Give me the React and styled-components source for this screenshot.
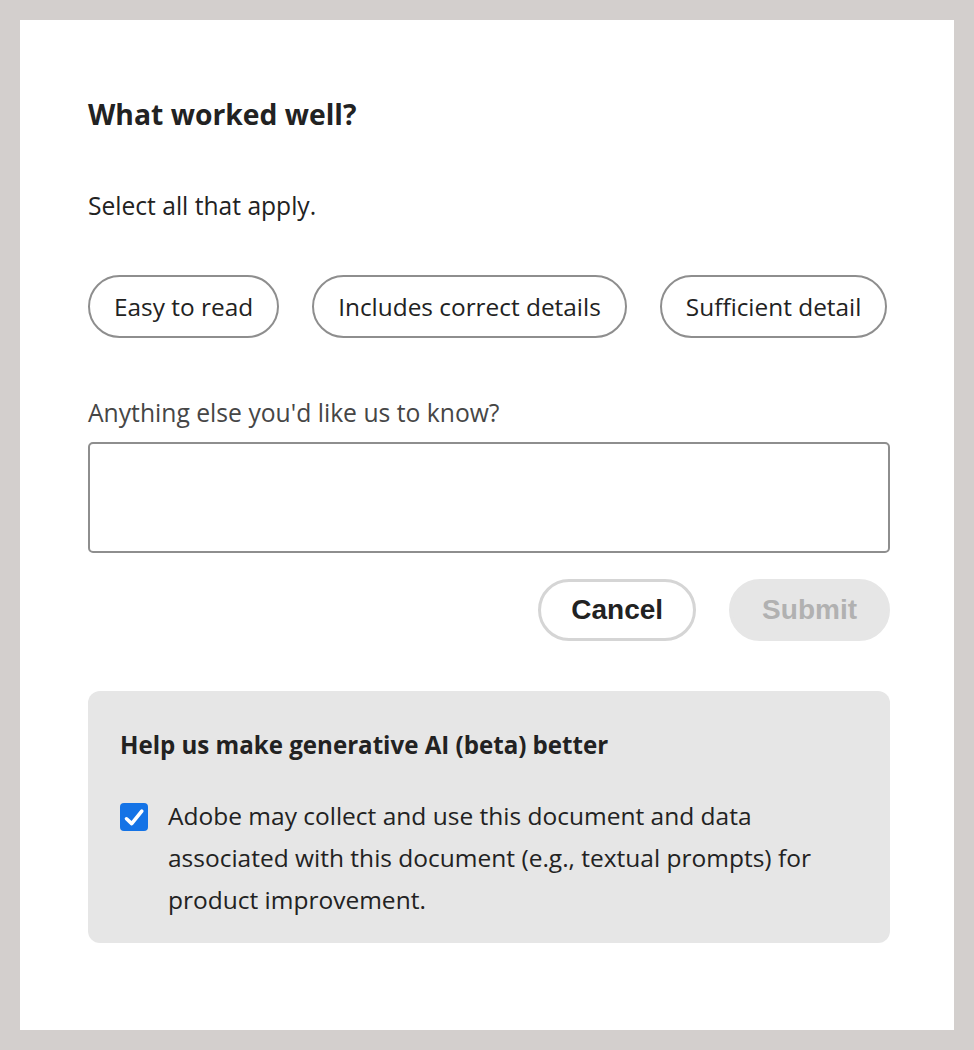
import React, { useState } from "react";
import styled, { createGlobalStyle } from "styled-components";

const GlobalStyle = createGlobalStyle`
  html, body {
    margin: 0;
    padding: 0;
    background: #d3cfcd;
  }
  body {
    font-family: "Open Sans", "Noto Sans", sans-serif;
    color: #222222;
  }
  * { box-sizing: border-box; }
`;

const Page = styled.div`
  padding: 20px;
  min-height: 1050px;
`;

const Card = styled.div`
  background: #ffffff;
  height: 1010px;
  padding: 76px 64px 0 68px;
  display: flex;
  flex-direction: column;
`;

const Title = styled.h2`
  margin: 0;
  font-size: 28.3px;
  line-height: 36px;
  font-weight: 700;
  color: #222222;
`;

const Hint = styled.p`
  margin: 58px 0 0;
  font-size: 24.6px;
  line-height: 32px;
  color: #222222;
`;

const ChipRow = styled.div`
  margin-top: 53px;
  display: flex;
  gap: 33px;
`;

const Chip = styled.button`
  height: 63px;
  padding: 0 24px;
  border: 2px solid ${(p) => (p.$on ? "#222222" : "#8e8e8e")};
  border-radius: 32px;
  background: ${(p) => (p.$on ? "#f0f0f0" : "#ffffff")};
  font-family: "Open Sans", "Noto Sans", sans-serif;
  font-size: 24.4px;
  color: #222222;
  cursor: pointer;
  white-space: nowrap;
`;

const Label = styled.label`
  display: block;
  margin-top: 59px;
  font-size: 24.7px;
  line-height: 32px;
  color: #464646;
`;

const TextArea = styled.textarea`
  display: block;
  margin-top: 13px;
  width: 802px;
  height: 111px;
  border: 2px solid #8e8e8e;
  border-radius: 5px;
  resize: none;
  padding: 10px 14px;
  font-family: "Open Sans", "Noto Sans", sans-serif;
  font-size: 22px;
  outline: none;
`;

const Actions = styled.div`
  margin-top: 26px;
  width: 802px;
  display: flex;
  justify-content: flex-end;
  gap: 33px;
`;

const ActionButton = styled.button`
  height: 62px;
  padding: 0 30px;
  border-radius: 31px;
  border: 3px solid ${(p) => (p.$primary ? "#e6e6e6" : "#d5d5d5")};
  background: ${(p) => (p.$primary ? "#e6e6e6" : "#ffffff")};
  color: ${(p) => (p.$primary ? "#b1b1b1" : "#222222")};
  font-family: "Liberation Sans", Arial, sans-serif;
  font-weight: 700;
  font-size: 28px;
  cursor: ${(p) => (p.disabled ? "default" : "pointer")};
`;

const ConsentBox = styled.div`
  margin-top: 50px;
  width: 802px;
  height: 252px;
  background: #e6e6e6;
  border-radius: 12px;
  padding: 38px 32px 0 32px;
`;

const ConsentTitle = styled.h3`
  margin: 0;
  font-size: 24.1px;
  line-height: 32px;
  font-weight: 700;
  color: #222222;
`;

const ConsentRow = styled.label`
  margin-top: 34px;
  display: flex;
  align-items: flex-start;
  gap: 20px;
  cursor: pointer;
`;

const Box = styled.span`
  flex: none;
  margin-top: 8px;
  width: 28px;
  height: 28px;
  border-radius: 4px;
  background: ${(p) => (p.$checked ? "#1473e6" : "#ffffff")};
  border: ${(p) => (p.$checked ? "none" : "2px solid #6e6e6e")};
  display: flex;
  align-items: center;
  justify-content: center;
`;

const ConsentText = styled.span`
  font-size: 24.5px;
  line-height: 42px;
  color: #222222;
`;

const chips = ["Easy to read", "Includes correct details", "Sufficient detail"];

export default function App() {
  const [selected, setSelected] = useState([]);
  const [checked, setChecked] = useState(true);
  const [text, setText] = useState("");

  const toggle = (c) =>
    setSelected((s) => (s.includes(c) ? s.filter((x) => x !== c) : [...s, c]));

  const canSubmit = selected.length > 0 || text.trim().length > 0;

  return (
    <>
      <GlobalStyle />
      <Page>
        <Card>
          <Title>What worked well?</Title>
          <Hint>Select all that apply.</Hint>
          <ChipRow>
            {chips.map((c) => (
              <Chip key={c} $on={selected.includes(c)} onClick={() => toggle(c)}>
                {c}
              </Chip>
            ))}
          </ChipRow>
          <Label htmlFor="more">Anything else you'd like us to know?</Label>
          <TextArea id="more" value={text} onChange={(e) => setText(e.target.value)} />
          <Actions>
            <ActionButton>Cancel</ActionButton>
            <ActionButton $primary disabled={!canSubmit}>
              Submit
            </ActionButton>
          </Actions>
          <ConsentBox>
            <ConsentTitle>Help us make generative AI (beta) better</ConsentTitle>
            <ConsentRow onClick={() => setChecked((v) => !v)}>
              <Box $checked={checked}>
                {checked && (
                  <svg width="28" height="28" viewBox="0 0 28 28">
                    <path
                      d="M6.5 15.8 L11.7 20.6 L21.8 8.2"
                      fill="none"
                      stroke="#ffffff"
                      strokeWidth="3.6"
                      strokeLinecap="round"
                      strokeLinejoin="round"
                    />
                  </svg>
                )}
              </Box>
              <ConsentText>
                Adobe may collect and use this document and data associated with this
                document (e.g., textual prompts) for product improvement.
              </ConsentText>
            </ConsentRow>
          </ConsentBox>
        </Card>
      </Page>
    </>
  );
}
